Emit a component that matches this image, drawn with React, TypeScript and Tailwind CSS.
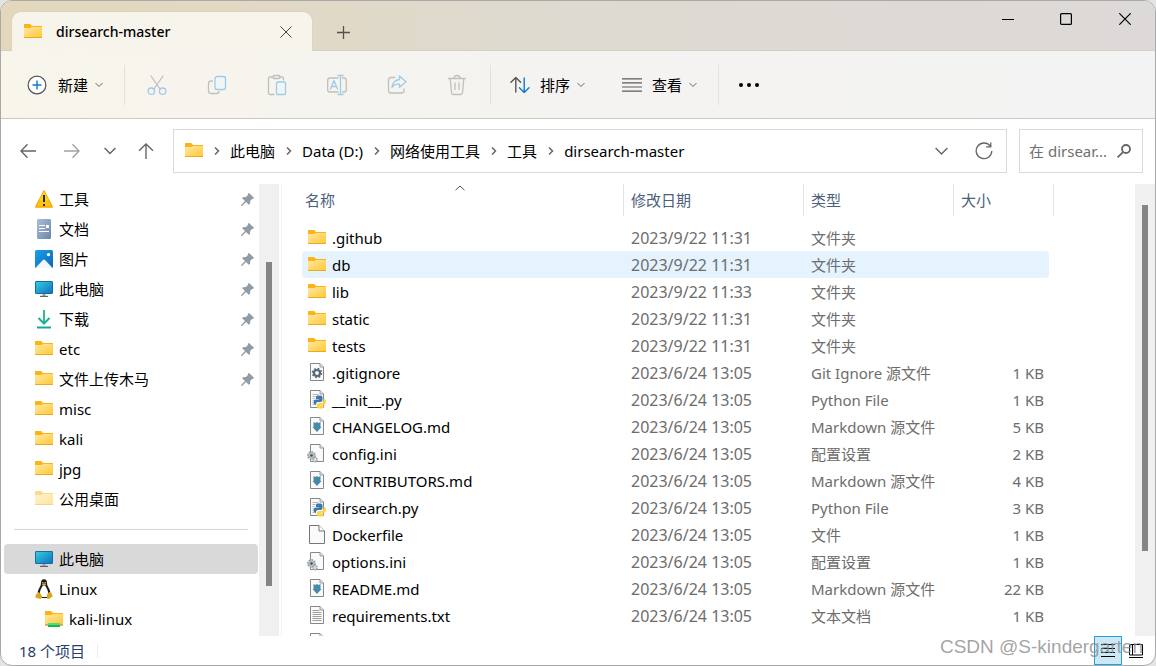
import type { ReactNode } from "react"

type FileKind = "folder" | "git" | "python" | "markdown" | "ini" | "blank" | "text"

interface FileItem {
  name: string
  kind: FileKind
  date: string
  type: string
  size?: string
  active?: boolean
}

const files: FileItem[] = [
  { name: ".github", kind: "folder", date: "2023/9/22 11:31", type: "文件夹" },
  { name: "db", kind: "folder", date: "2023/9/22 11:31", type: "文件夹", active: true },
  { name: "lib", kind: "folder", date: "2023/9/22 11:33", type: "文件夹" },
  { name: "static", kind: "folder", date: "2023/9/22 11:31", type: "文件夹" },
  { name: "tests", kind: "folder", date: "2023/9/22 11:31", type: "文件夹" },
  { name: ".gitignore", kind: "git", date: "2023/6/24 13:05", type: "Git Ignore 源文件", size: "1 KB" },
  { name: "__init__.py", kind: "python", date: "2023/6/24 13:05", type: "Python File", size: "1 KB" },
  { name: "CHANGELOG.md", kind: "markdown", date: "2023/6/24 13:05", type: "Markdown 源文件", size: "5 KB" },
  { name: "config.ini", kind: "ini", date: "2023/6/24 13:05", type: "配置设置", size: "2 KB" },
  { name: "CONTRIBUTORS.md", kind: "markdown", date: "2023/6/24 13:05", type: "Markdown 源文件", size: "4 KB" },
  { name: "dirsearch.py", kind: "python", date: "2023/6/24 13:05", type: "Python File", size: "3 KB" },
  { name: "Dockerfile", kind: "blank", date: "2023/6/24 13:05", type: "文件", size: "1 KB" },
  { name: "options.ini", kind: "ini", date: "2023/6/24 13:05", type: "配置设置", size: "1 KB" },
  { name: "README.md", kind: "markdown", date: "2023/6/24 13:05", type: "Markdown 源文件", size: "22 KB" },
  { name: "requirements.txt", kind: "text", date: "2023/6/24 13:05", type: "文本文档", size: "1 KB" },
  { name: "", kind: "git", date: "", type: "" },
]

const crumbs = ["此电脑", "Data (D:)", "网络使用工具", "工具", "dirsearch-master"]

function FolderIcon({ faded = false, linked = false }: { faded?: boolean; linked?: boolean }) {
  return (
    <svg width="18" height="16" viewBox="0 0 18 16" className={faded ? "opacity-50" : ""} aria-hidden="true">
      <defs>
        <linearGradient id="folderFront" x1="0" y1="0" x2="1" y2="1">
          <stop offset="0" stopColor="#ffe8a3" />
          <stop offset="1" stopColor="#ffc832" />
        </linearGradient>
      </defs>
      <path d="M0 .5Q0 0 .5 0H6.2L8 2H17.5Q18 2 18 2.5V8H0Z" fill="#fbb416" />
      <path d="M0 4H6.2L8 3H18V13.5Q18 14 17.5 14H.5Q0 14 0 13.5Z" fill="url(#folderFront)" />
      <path d="M0 13H18V13.5Q18 14 17.5 14H.5Q0 14 0 13.5Z" fill="#eba91d" />
      {linked && (
        <>
          <path d="M0 14.5H18" stroke="#b9bec2" />
          <path d="M3 12H15V16H3Z" fill="#23b04b" />
          <path d="M3 12H15V14H3Z" fill="#4be36f" />
        </>
      )}
    </svg>
  )
}

function WarningIcon() {
  return (
    <svg width="18" height="18" viewBox="0 0 18 18" aria-hidden="true">
      <path d="M9 .8 17.3 17H.7Z" fill="#ffc40c" stroke="#f5a800" strokeWidth="1.4" strokeLinejoin="round" />
      <path d="M9 1 13.5 10H4.5Z" fill="#ffd21c" />
      <path d="M8 5h2v7H8zM8 14h2v2H8z" fill="#1f2a36" />
    </svg>
  )
}

function DocumentIcon() {
  return (
    <svg width="18" height="20" viewBox="0 0 18 20" aria-hidden="true">
      <defs>
        <linearGradient id="docFill" x1="0" y1="0" x2="1" y2="1">
          <stop offset="0" stopColor="#a9bfd8" />
          <stop offset="1" stopColor="#6a87a8" />
        </linearGradient>
      </defs>
      <rect x="2" width="14" height="20" rx="1.2" fill="url(#docFill)" />
      <path d="M4 6.5h6M4 9.5h6M4 12.5h10" stroke="#fff" />
      <path d="M11 6h3v3h-3z" fill="#fff" />
    </svg>
  )
}

function PictureIcon() {
  return (
    <svg width="18" height="18" viewBox="0 0 18 18" aria-hidden="true">
      <defs>
        <linearGradient id="picFill" x1="0" y1="0" x2="1" y2="1">
          <stop offset="0" stopColor="#1ca0e8" />
          <stop offset="1" stopColor="#0b66ba" />
        </linearGradient>
      </defs>
      <rect width="18" height="18" rx="1.5" fill="url(#picFill)" />
      <path d="M.8 17.6 8 10Q9 9.2 10 10L17.2 17.6Q17 18 16 18H2Q1 18 .8 17.6Z" fill="#f1f8ff" />
      <circle cx="13.5" cy="4.6" r="1.7" fill="#fff" />
    </svg>
  )
}

function ComputerIcon() {
  return (
    <svg width="18" height="16" viewBox="0 0 18 16" aria-hidden="true">
      <defs>
        <linearGradient id="pcFill" x1="0" y1="0" x2="1" y2="1">
          <stop offset="0" stopColor="#34d0dd" />
          <stop offset="1" stopColor="#0f6fc4" />
        </linearGradient>
      </defs>
      <rect x=".5" y=".5" width="17" height="12" rx=".5" fill="url(#pcFill)" stroke="#1b6c9c" />
      <path d="M7.5 13h3v2h-3z" fill="#9aa4ac" />
      <path d="M5 15.4h8" stroke="#5d666d" strokeWidth="1.2" />
    </svg>
  )
}

function DownloadIcon() {
  return (
    <svg width="18" height="20" viewBox="0 0 18 20" fill="none" strokeWidth="2" aria-hidden="true">
      <path d="M9 1v13" stroke="#28c08e" />
      <path d="M3.5 9 9 14.5 14.5 9" stroke="#19b09a" />
      <path d="M2 18.5h14" stroke="#14a79d" />
    </svg>
  )
}

function LinuxIcon() {
  return (
    <svg width="18" height="20" viewBox="0 0 18 20" aria-hidden="true">
      <path d="M9 .2C6.8.2 6 1.8 6 3.8 6 6.200 5.200 7.500 4 9.500 3 11.500 2.400 13 3 15.500L6 19h6l3-3.500c.6-2.500 0-4-1-6C12.800 7.500 12 6.200 12 3.800 12 1.800 11.200.2 9 .2Z" fill="#1c1c1c" />
      <path d="M9 6.500C7.200 6.500 6.800 8.500 5.600 10.800 4.600 13 4.800 15.500 6 18h6c1.200-2.500 1.400-5 .4-7.200C11.200 8.500 10.800 6.500 9 6.500Z" fill="#fff" />
      <path d="M7.200 3h1.300v1.400H7.200zM9.600 3h1.300v1.400H9.600z" fill="#b9b9b9" />
      <path d="M6.700 5.500 9 4.300l2.300 1.200L9 7.200Z" fill="#e0a41c" />
      <path d="M3.200 13c1.400 0 2.800 2.400 3.700 4 .6 1.800-.6 3-2.300 2.700L.7 18.800c-.7-.6.1-1.900 0-3.100.3-.8 1.400-.5 1.600-1.300.1-.8.300-1.400.9-1.400ZM14.800 13c-1.400.2-2.100 1.700-2.600 3.200-.6 1.900-.5 3.500.9 3.700 1.700 0 2.600-1.300 4.500-2.400.6-.7-.7-1.300-.8-2.400-.2-1.300-.9-2-2-2.100Z" fill="#dba51b" />
    </svg>
  )
}

function PinIcon() {
  return (
    <svg width="13" height="13" viewBox="0 0 13 13" fill="#909ca5" aria-label="已固定">
      <path d="M8 0 13 4.8 12.3 5.800 11 6 9.200 8 9 11 7.800 11.800 5 9 1 13 0 12.7.2 12 4 8 1.200 5.200 1.800 4.200 5 3.900 6.900 2 7.100.6Z" />
    </svg>
  )
}

function Page({ children }: { children?: ReactNode }) {
  return (
    <svg width="18" height="20" viewBox="0 0 18 20" className="overflow-visible" aria-hidden="true">
      <path d="M2.5.5H12l3.5 3.5V17.5h-13Z" fill="#fafafa" stroke="#85888a" />
      <path d="M12 .5V4h3.5" fill="#e6e6e6" stroke="#85888a" strokeWidth=".8" />
      {children}
    </svg>
  )
}

function FileIcon({ kind }: { kind: FileKind }) {
  switch (kind) {
    case "folder":
      return <FolderIcon />
    case "git":
      return (
        <Page>
          <circle cx="9" cy="10" r="3" fill="none" stroke="#566874" strokeWidth="2.2" />
          <circle cx="9" cy="10" r="4.6" fill="none" stroke="#566874" strokeWidth="1.4" strokeDasharray="1.8 1.81" />
        </Page>
      )
    case "python":
      return (
        <Page>
          <path d="M4.5 4.5h6M4.5 6.5h3M4.5 8.5h2M4.5 10.5h1M4.5 12.5h1M4.5 14.5h2" stroke="#b4b7b9" />
          <path d="M9.5 5.500H12.500Q14.500 5.500 14.500 7.500V10Q14.500 12 12.500 12H10Q8 12 8 14V15H7.500Q5.500 15 5.500 12.300T7.500 9.500H11V9H8V7Q8 5.500 9.500 5.500Z" fill="#3a78ad" />
          <path d="M15.500 9H16Q18 9 18 11.800T16 14.800H12.500V15.500H15.500V17Q15.500 18.500 13.500 18.500H11Q9 18.500 9 16.800V15Q9 13 11 13H13.500Q15.500 13 15.500 11Z" fill="#ffd43f" />
        </Page>
      )
    case "markdown":
      return (
        <Page>
          <path d="M5.5 5 7.5 6 9 5 10.5 6 12.5 5V10H13.5L9 15 4.5 10H5.5Z" fill="#4689a8" />
        </Page>
      )
    case "ini":
      return (
        <Page>
          <circle cx="3.500" cy="11.500" r="3.300" fill="#cbd1d5" stroke="#9aa2a7" strokeWidth="2.400" strokeDasharray="1.700 .800" />
          <circle cx="3.500" cy="11.500" r="1.300" fill="#3e464b" />
          <circle cx="7" cy="15.700" r="2.100" fill="#dce0e2" stroke="#9aa2a7" strokeWidth="1.500" strokeDasharray="1.300 .700" />
        </Page>
      )
    case "text":
      return (
        <Page>
          <path d="M4.5 4.5h7M4.5 6.5h9M4.5 8.5h9M4.5 10.5h9M4.5 12.5h9M4.5 14.5h9" stroke="#9b9d9f" />
        </Page>
      )
    default:
      return (
        <svg width="18" height="20" viewBox="0 0 18 20" aria-hidden="true">
          <path d="M1.5.5H11L16.5 6V18.5h-15Z" fill="#fafafa" stroke="#74777a" />
          <path d="M11 .5V6h5.5" fill="#fff" stroke="#74777a" />
        </svg>
      )
  }
}

function Chevron({ className = "" }: { className?: string }) {
  return (
    <svg width="8" height="6" viewBox="0 0 8 6" fill="none" stroke="currentColor" className={className} aria-hidden="true">
      <path d="M.5 1 4 4.5 7.5 1" />
    </svg>
  )
}

function NavItem({
  icon,
  label,
  pinned = false,
  selected = false,
  nested = false,
}: {
  icon: ReactNode
  label: string
  pinned?: boolean
  selected?: boolean
  nested?: boolean
}) {
  return (
    <li>
      <button
        className={`flex h-[30px] w-full items-center gap-1.5 rounded-sm pr-1 text-left ${selected ? "bg-[#d9d9d9]" : ""} ${nested ? "pl-[41px]" : "pl-[31px]"}`}
      >
        <span className="flex w-[18px] justify-center">{icon}</span>
        <span className="flex-1">{label}</span>
        {pinned && <PinIcon />}
      </button>
    </li>
  )
}

function ToolButton({ label, children }: { label: string; children: ReactNode }) {
  return (
    <button disabled aria-label={label} className="flex h-10 w-[60px] items-center justify-center">
      <svg width="20" height="22" viewBox="0 0 20 22" fill="none" stroke="#c1bfbb" strokeWidth="1.3" strokeLinecap="round" strokeLinejoin="round">
        {children}
      </svg>
    </button>
  )
}

function TitleBar() {
  return (
    <header className="flex h-[50px] items-end border-b border-[#d4cfc2] bg-linear-to-r from-[#e3d8bb] via-[#dedad1] to-[#dcd9d8]">
      <div className="-mb-px ml-2.5 flex h-10 w-[302px] items-center rounded-t-[10px] border border-b-0 border-[#dbd3bd] bg-[#f7f4eb] px-3">
        <FolderIcon />
        <span className="ml-3.5 flex-1 text-sm font-medium">dirsearch-master</span>
        <button aria-label="关闭标签页" className="flex size-7 items-center justify-center">
          <svg width="12" height="12" viewBox="0 0 12 12" stroke="#444" aria-hidden="true">
            <path d="M.5.5 11.5 11.5M11.5.5.5 11.5" />
          </svg>
        </button>
      </div>
      <button aria-label="新建标签页" className="mb-1 ml-4 flex size-7 items-center justify-center">
        <svg width="13" height="13" viewBox="0 0 13 13" stroke="#55524c" strokeWidth="1.3" aria-hidden="true">
          <path d="M6.5 0v13M0 6.5h13" />
        </svg>
      </button>
      <div className="ml-auto flex self-start">
        <button aria-label="最小化" className="flex h-9 w-[58px] items-center justify-center">
          <svg width="12" height="12" viewBox="0 0 12 12" stroke="#000" aria-hidden="true">
            <path d="M0 6.5h12" />
          </svg>
        </button>
        <button aria-label="最大化" className="flex h-9 w-[58px] items-center justify-center">
          <svg width="12" height="12" viewBox="0 0 12 12" fill="none" stroke="#000" strokeWidth="1.2" aria-hidden="true">
            <rect x=".6" y=".6" width="10.8" height="10.8" rx="1" />
          </svg>
        </button>
        <button aria-label="关闭" className="flex h-9 w-[60px] items-center justify-center">
          <svg width="12" height="12" viewBox="0 0 12 12" stroke="#000" strokeWidth="1.2" aria-hidden="true">
            <path d="M.3.3 11.7 11.7M11.7.3.3 11.7" />
          </svg>
        </button>
      </div>
    </header>
  )
}

function CommandBar() {
  return (
    <div className="flex h-[68px] items-center border-b border-[#cdc8bf] bg-linear-to-r from-[#f8f5eb] via-[#f4f3f1] to-[#f3f3f3] text-black">
      <button className="ml-[26px] flex h-10 w-[97px] items-center">
        <svg width="20" height="20" viewBox="0 0 20 20" fill="#fff" stroke="#555" strokeWidth="1.2" aria-hidden="true">
          <circle cx="10" cy="10" r="8.9" />
          <path d="M10 5.5v9M5.5 10h9" stroke="#0f78d4" strokeWidth="1.4" />
        </svg>
        <span className="ml-[11px]">新建</span>
        <Chevron className="ml-[7px] text-[#666]" />
      </button>
      <div className="mr-0.5 h-10 w-px bg-[#e4e1db]" />
      <ToolButton label="剪切">
        <path d="M4 2 12.7 14.5M16 2 7.3 14.5" />
        <circle cx="4.3" cy="17.2" r="3.2" stroke="#9ccbec" />
        <circle cx="15.7" cy="17.2" r="3.2" stroke="#9ccbec" />
      </ToolButton>
      <ToolButton label="复制">
        <path d="M5.5 7H4Q1.5 7 1.5 9.5V17Q1.5 19.5 4 19.5H9.5Q12 19.5 12 17.5" />
        <rect x="8" y="2.5" width="10.5" height="13" rx="2.2" fill="#f2f5f6" stroke="#9ccbec" />
      </ToolButton>
      <ToolButton label="粘贴">
        <path d="M6.5 3H3Q1.5 3 1.5 4.5V19Q1.5 20.5 3 20.5H7M12.5 3H15Q16.5 3 16.5 4.5V6" />
        <rect x="6" y="1.5" width="7" height="3" rx="1.5" />
        <rect x="9.5" y="8" width="9" height="12.5" rx="1.2" fill="#f2f5f6" stroke="#9ccbec" />
      </ToolButton>
      <ToolButton label="重命名">
        <path d="M11 4H3Q.7 4 .7 6.3V15.7Q.7 18 3 18H11M15.5 4H17Q19.3 4 19.3 6.3V15.7Q19.3 18 17 18H15.5" />
        <path d="M3.5 15 7 6.5 10.5 15M4.8 12.5H9.2M11 1.5H16M13.5 1.5V20.5M11 20.5H16" stroke="#9ccbec" />
      </ToolButton>
      <ToolButton label="共享">
        <path d="M8 3.5H4Q1.5 3.5 1.5 6V16.5Q1.5 19 4 19H14.5Q17 19 17 16.5V15" />
        <path d="M12.5 2 19 7.8 12.5 13.3V10.2Q7.5 9.8 5 13.5 6 6 12.5 5.5Z" stroke="#9ccbec" />
      </ToolButton>
      <ToolButton label="删除">
        <path d="M1.5 4.5H18.5M7 4.5Q7 1.5 10 1.5T13 4.5M3.2 4.5 4.5 18.5Q4.8 20.5 6.5 20.5H13.5Q15.2 20.5 15.5 18.5L16.8 4.5M8 9V15.5M12 9V15.5" />
      </ToolButton>
      <div className="ml-[3px] h-10 w-px bg-[#e2e1df]" />
      <button className="ml-[19px] flex h-10 items-center">
        <svg width="20" height="18" viewBox="0 0 20 18" fill="none" strokeWidth="1.4" strokeLinecap="round" strokeLinejoin="round" aria-hidden="true">
          <path d="M5.8 16V1.5M1 6.3 5.8 1.5 10.6 6.3" stroke="#555" />
          <path d="M14.2 2V16.5M9.4 11.7 14.2 16.5 19 11.7" stroke="#0f78d4" />
        </svg>
        <span className="ml-2.5">排序</span>
        <Chevron className="ml-[7px] text-[#666]" />
      </button>
      <button className="ml-[37px] flex h-10 items-center">
        <svg width="20" height="14" viewBox="0 0 20 14" stroke="#5a5a5a" strokeWidth="1.2" aria-hidden="true">
          <path d="M0 .8H20M0 4.9H20M0 9H20M0 13.1H20" />
        </svg>
        <span className="ml-2.5">查看</span>
        <Chevron className="ml-[7px] text-[#666]" />
      </button>
      <div className="ml-[21px] h-10 w-px bg-[#e2e2e2]" />
      <button aria-label="更多" className="ml-[18px] flex h-10 w-6 items-center justify-center">
        <svg width="20" height="4" viewBox="0 0 20 4" aria-hidden="true">
          <circle cx="2" cy="2" r="2" />
          <circle cx="10" cy="2" r="2" />
          <circle cx="18" cy="2" r="2" />
        </svg>
      </button>
    </div>
  )
}

function AddressBar() {
  return (
    <div className="flex h-[65px] items-center pb-0.5 pr-3 text-[#666]">
      <button aria-label="后退" className="ml-[17px] flex size-5 items-center justify-center">
        <svg width="16" height="16" viewBox="0 0 16 16" fill="none" stroke="currentColor" strokeWidth="1.4" aria-hidden="true">
          <path d="M16 8H1.2M7.5 1.2 1 8 7.5 14.8" />
        </svg>
      </button>
      <button aria-label="前进" disabled className="ml-6 flex size-5 items-center justify-center text-[#a3a3a3]">
        <svg width="16" height="16" viewBox="0 0 16 16" fill="none" stroke="currentColor" strokeWidth="1.4" aria-hidden="true">
          <path d="M0 8H14.8M8.5 1.2 15 8 8.5 14.8" />
        </svg>
      </button>
      <button aria-label="最近位置" className="ml-[18px] flex size-5 items-center justify-center">
        <svg width="12" height="8" viewBox="0 0 12 8" fill="none" stroke="currentColor" strokeWidth="1.5" aria-hidden="true">
          <path d="M.6 1 6 6.5 11.4 1" />
        </svg>
      </button>
      <button aria-label="上移" className="ml-4 flex size-5 items-center justify-center">
        <svg width="16" height="16" viewBox="0 0 16 16" fill="none" stroke="currentColor" strokeWidth="1.4" aria-hidden="true">
          <path d="M8 16V1.2M1 7.8 8 1 15 7.8" />
        </svg>
      </button>
      <nav aria-label="地址栏" className="ml-[17px] flex h-11 flex-1 items-center border border-[#d9d9d9] pl-[11px] pr-3 text-black">
        <FolderIcon />
        {crumbs.map((crumb) => (
          <span key={crumb} className="flex items-center">
            <svg width="6" height="10" viewBox="0 0 6 10" fill="none" stroke="#666" strokeWidth="1.5" className="ml-[11px] mr-2.5" aria-hidden="true">
              <path d="M1 1.5 4.5 5 1 8.5" />
            </svg>
            <a href="#">{crumb}</a>
          </span>
        ))}
        <button aria-label="以前的位置" className="ml-auto flex size-5 items-center justify-center text-[#666]">
          <svg width="13" height="8" viewBox="0 0 13 8" fill="none" stroke="currentColor" strokeWidth="1.4" aria-hidden="true">
            <path d="M.6 1 6.5 7 12.4 1" />
          </svg>
        </button>
        <button aria-label="刷新" className="ml-[23px] flex size-5 items-center justify-center text-[#666]">
          <svg width="18" height="18" viewBox="0 0 18 18" fill="none" stroke="currentColor" strokeWidth="1.3" aria-hidden="true">
            <path d="M15.5 4.5A7.8 7.8 0 1 0 16.8 9M15.8.5V4.8H11" />
          </svg>
        </button>
      </nav>
      <label className="ml-3 flex h-11 w-[124px] items-center border border-[#d9d9d9] pl-[9px] pr-[11px]">
        <input aria-label="搜索" placeholder="在 dirsear..." className="w-0 min-w-0 flex-1 outline-none placeholder:text-[#6f6f6f]" />
        <svg width="14" height="14" viewBox="0 0 14 14" fill="none" stroke="#666" strokeWidth="1.8" aria-hidden="true">
          <circle cx="9" cy="5" r="4" />
          <path d="M6.2 7.8.6 13.4" />
        </svg>
      </label>
    </div>
  )
}

function Sidebar() {
  return (
    <aside className="flex w-[281px] shrink-0 border-r border-[#f3f3f3]">
      <nav aria-label="导航窗格" className="min-w-0 flex-1 overflow-hidden pl-[3px] pr-px">
        <ul>
          <NavItem icon={<WarningIcon />} label="工具" pinned />
          <NavItem icon={<DocumentIcon />} label="文档" pinned />
          <NavItem icon={<PictureIcon />} label="图片" pinned />
          <NavItem icon={<ComputerIcon />} label="此电脑" pinned />
          <NavItem icon={<DownloadIcon />} label="下载" pinned />
          <NavItem icon={<FolderIcon />} label="etc" pinned />
          <NavItem icon={<FolderIcon />} label="文件上传木马" pinned />
          <NavItem icon={<FolderIcon />} label="misc" />
          <NavItem icon={<FolderIcon />} label="kali" />
          <NavItem icon={<FolderIcon />} label="jpg" />
          <NavItem icon={<FolderIcon faded />} label="公用桌面" />
        </ul>
        <hr className="mx-2.5 -mb-px mt-[15px] border-[#d6d6d6]" />
        <ul className="pt-[15px]">
          <NavItem icon={<ComputerIcon />} label="此电脑" selected />
          <NavItem icon={<LinuxIcon />} label="Linux" />
          <NavItem icon={<FolderIcon linked />} label="kali-linux" nested />
        </ul>
      </nav>
      <div className="mr-0.5 flex w-5 flex-col items-center bg-[#f0f0f0]">
        <div className="grow-[78]" />
        <div className="w-1.5 grow-[324] bg-[#858585]" />
        <div className="grow-[50]" />
      </div>
    </aside>
  )
}

function FileTable() {
  const headCell = "flex h-8 items-center border-r border-[#e3e3e3] text-[#4c607a]"

  return (
    <div className="min-w-0 flex-1 overflow-hidden pl-5">
      <table className="w-[752px] table-fixed text-left">
        <colgroup>
          <col className="w-[322px]" />
          <col className="w-[180px]" />
          <col className="w-[150px]" />
          <col className="w-[95px]" />
          <col className="w-[5px]" />
        </colgroup>
        <thead>
          <tr>
            <th scope="col" className="relative p-0 pb-2 font-normal">
              <svg width="10" height="6" viewBox="0 0 10 6" fill="none" stroke="#555" className="absolute left-[153px] top-px" aria-hidden="true">
                <path d="M.5 5.2 5 1 9.5 5.2" />
              </svg>
              <div className={`${headCell} pl-[3px]`}>名称</div>
            </th>
            <th scope="col" className="p-0 pb-2 font-normal">
              <div className={`${headCell} pl-[7px]`}>修改日期</div>
            </th>
            <th scope="col" className="p-0 pb-2 font-normal">
              <div className={`${headCell} pl-[7px]`}>类型</div>
            </th>
            <th scope="col" className="p-0 pb-2 font-normal">
              <div className="flex h-8 items-center pl-[7px] text-[#4c607a]">大小</div>
            </th>
            <td className="p-0 pb-2">
              <div className={headCell} />
            </td>
          </tr>
        </thead>
        <tbody>
          {files.map((file, index) => {
            const bg = file.active ? "bg-[#e5f3ff]" : ""
            return (
              <tr key={index} className="h-[27px] whitespace-nowrap text-[#6d6d6d]">
                <td className={`rounded-l-sm p-0 pl-1.5 ${bg}`}>
                  <span className="flex items-center gap-1.5 text-black">
                    <FileIcon kind={file.kind} />
                    {file.name}
                  </span>
                </td>
                <td className={`p-0 pl-[7px] text-base leading-5 ${bg}`}>{file.date}</td>
                <td className={`p-0 pl-[7px] ${bg}`}>{file.type}</td>
                <td className={`rounded-r-sm p-0 pr-[5px] text-right ${bg}`}>{file.size}</td>
                <td className="p-0" />
              </tr>
            )
          })}
        </tbody>
      </table>
    </div>
  )
}

function StatusBar() {
  return (
    <footer className="relative flex h-[29px] items-center pl-[18px] pr-3 text-[#24406a]">
      <span>18 个项目</span>
      <div className="ml-3 h-3.5 w-px bg-[#ececec]" />
      <button aria-label="详细信息" className="ml-auto flex h-[29px] w-7 items-center justify-center border border-[#26a0da] bg-[#cbe8f6]">
        <svg width="14" height="13" viewBox="0 0 14 13" stroke="#000" aria-hidden="true">
          <path d="M0 .5h14M0 4.5h14M0 8.5h14M0 12.5h14" />
        </svg>
      </button>
      <button aria-label="大图标" className="ml-[7px] flex h-7 w-3.5 items-center justify-center">
        <svg width="14" height="14" viewBox="0 0 14 14" fill="none" stroke="#000" aria-hidden="true">
          <path d="M.5.5h13v10.5H.5ZM0 13.5h14M3.5 1v10" />
        </svg>
      </button>
      <span className="pointer-events-none absolute bottom-1.5 right-3 font-['Liberation_Sans',sans-serif] text-[19px] leading-6 text-[#8c8c8c]/80">
        CSDN @S-kindergarten
      </span>
    </footer>
  )
}

export default function App() {
  return (
    <div className="h-screen bg-[#e4e4e4] font-['Noto_Sans','Noto_Sans_CJK_SC',sans-serif] text-[15px] leading-5 text-black">
      <div className="flex h-full flex-col overflow-hidden rounded-xl border border-[#a9a9a9] bg-white">
        <TitleBar />
        <CommandBar />
        <AddressBar />
        <main className="flex min-h-0 flex-1">
          <Sidebar />
          <FileTable />
          <div className="ml-auto flex w-5 flex-col items-center bg-[#f0f0f0]">
            <div className="grow-[21]" />
            <div className="w-1.5 grow-[346] bg-[#858585]" />
            <div className="grow-[85]" />
          </div>
        </main>
        <StatusBar />
      </div>
    </div>
  )
}
